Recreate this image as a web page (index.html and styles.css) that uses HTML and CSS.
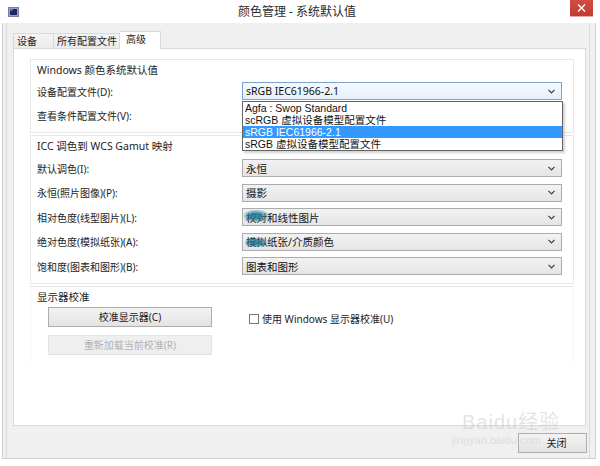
FILE: index.html
```html
<!DOCTYPE html>
<html lang="zh-CN">
<head>
<meta charset="utf-8">
<title>颜色管理 - 系统默认值</title>
<link rel="stylesheet" href="styles.css">
</head>
<body>
<div class="window">
  <div class="titlebar">
    <div class="tb-left">
      <svg class="appicon" width="11" height="10" viewBox="0 0 11 10">
        <rect x="0.5" y="0.5" width="10" height="9" fill="#9ea3c0" stroke="#7c80a0"/>
        <rect x="2" y="2" width="7" height="6" fill="#1d2466"/>
        <rect x="2" y="2" width="3" height="2" fill="#5a64b0"/>
      </svg>
    </div>
    <div class="title">颜色管理 - 系统默认值</div>
    <div class="tb-right">
      <div class="closebox">
        <svg width="9" height="8" viewBox="0 0 9 8"><path d="M1 0.5 L8 7.5 M8 0.5 L1 7.5" stroke="#fff" stroke-width="1.3" fill="none"/></svg>
      </div>
    </div>
  </div>

  <div class="client">
    <div class="inner">
      <div class="tabs">
        <div class="tab t1">设备</div>
        <div class="tab t2">所有配置文件</div>
        <div class="tab active t3">高级</div>
      </div>

      <div class="panel">
        <div class="group">
          <div class="ghead">Windows 颜色系统默认值</div>
          <div class="rows first">
            <div class="row">
              <span class="label">设备配置文件(D):</span>
              <div class="combo-wrap">
                <div class="combo open"><span>sRGB IEC61966-2.1</span><svg class="chev" width="7" height="5" viewBox="0 0 7 5"><polyline points="0.5,0.8 3.5,3.8 6.5,0.8" fill="none" stroke="#3c3c3c" stroke-width="1.2"/></svg></div>
                <ul class="list">
                  <li>Agfa : Swop Standard</li>
                  <li>scRGB 虚拟设备模型配置文件</li>
                  <li class="sel">sRGB IEC61966-2.1</li>
                  <li>sRGB 虚拟设备模型配置文件</li>
                </ul>
              </div>
            </div>
            <div class="row">
              <span class="label">查看条件配置文件(V):</span>
              <div class="combo"><span></span><svg class="chev" width="7" height="5" viewBox="0 0 7 5"><polyline points="0.5,0.8 3.5,3.8 6.5,0.8" fill="none" stroke="#3c3c3c" stroke-width="1.2"/></svg></div>
            </div>
          </div>
        </div>

        <div class="group">
          <div class="ghead">ICC 调色到 WCS Gamut 映射</div>
          <div class="rows second">
            <div class="row">
              <span class="label">默认调色(I):</span>
              <div class="combo"><span>永恒</span><svg class="chev" width="7" height="5" viewBox="0 0 7 5"><polyline points="0.5,0.8 3.5,3.8 6.5,0.8" fill="none" stroke="#3c3c3c" stroke-width="1.2"/></svg></div>
            </div>
            <div class="row">
              <span class="label">永恒(照片图像)(P):</span>
              <div class="combo"><span>摄影</span><svg class="chev" width="7" height="5" viewBox="0 0 7 5"><polyline points="0.5,0.8 3.5,3.8 6.5,0.8" fill="none" stroke="#3c3c3c" stroke-width="1.2"/></svg></div>
            </div>
            <div class="row">
              <span class="label">相对色度(线型图片)(L):</span>
              <div class="combo"><span>校对和线性图片</span><i class="smudge s1"></i><svg class="chev" width="7" height="5" viewBox="0 0 7 5"><polyline points="0.5,0.8 3.5,3.8 6.5,0.8" fill="none" stroke="#3c3c3c" stroke-width="1.2"/></svg></div>
            </div>
            <div class="row">
              <span class="label">绝对色度(模拟纸张)(A):</span>
              <div class="combo"><span>模拟纸张/介质颜色</span><i class="smudge s2"></i><svg class="chev" width="7" height="5" viewBox="0 0 7 5"><polyline points="0.5,0.8 3.5,3.8 6.5,0.8" fill="none" stroke="#3c3c3c" stroke-width="1.2"/></svg></div>
            </div>
            <div class="row">
              <span class="label">饱和度(图表和图形)(B):</span>
              <div class="combo"><span>图表和图形</span><svg class="chev" width="7" height="5" viewBox="0 0 7 5"><polyline points="0.5,0.8 3.5,3.8 6.5,0.8" fill="none" stroke="#3c3c3c" stroke-width="1.2"/></svg></div>
            </div>
          </div>
        </div>

        <div class="group last">
          <div class="ghead">显示器校准</div>
          <div class="calib">
            <div class="btncol">
              <div class="btn">校准显示器(C)</div>
              <div class="btn disabled">重新加载当前校准(R)</div>
            </div>
            <div class="check">
              <span class="box"></span>
              <span>使用 Windows 显示器校准(U)</span>
            </div>
          </div>
        </div>
      </div>

      <div class="footer">
        <div class="btn closebtn">关闭</div>
      </div>
    </div>
  </div>

  <div class="watermark">
    <span class="wm1">Baidu经验</span>
    <span class="wm2">jingyan.baidu.com</span>
  </div>
</div>
</body>
</html>
```

FILE: styles.css
```css
* { box-sizing: border-box; }

html, body {
  margin: 0;
  padding: 0;
  background: #ffffff;
}

.window {
  position: relative;
  width: 600px;
  height: 466px;
  overflow: hidden;
  font-family: "Noto Sans", "Noto Sans CJK SC", sans-serif;
  font-size: 10px;
  color: #1c1c1c;
  display: flex;
  flex-direction: column;
}

/* title bar */
.titlebar {
  height: 23px;
  flex: none;
  display: grid;
  grid-template-columns: 1fr auto 1fr;
  background: #ffffff;
}
.tb-left {
  padding: 7px 0 0 8px;
}
.appicon { display: block; }
.title {
  font-size: 12px;
  line-height: 23px;
  color: #2b2b2b;
  padding-right: 6px;
}
.tb-right {
  display: flex;
  justify-content: flex-end;
  padding-right: 7px;
}
.closebox {
  width: 23px;
  height: 17px;
  background: linear-gradient(#cf4d45, #c33a32);
  border-bottom: 1px solid #e4a9a5;
  display: flex;
  align-items: center;
  justify-content: center;
}
.closebox svg { display: block; }

/* client frame */
.client {
  flex: none;
  height: 436px;
  margin: 0 4px 0 2px;
  border: 1px solid #cfcfcf;
  border-top: none;
  background: #f0f0f0;
  display: flex;
}
.inner {
  flex: 1;
  margin: 0 5px 0 3px;
  border-left: 1px solid #dadada;
  border-right: 1px solid #dadada;
  padding: 0 3px 0 6px;
  display: flex;
  flex-direction: column;
}

/* tabs */
.tabs {
  display: flex;
  align-items: flex-end;
  height: 26px;
  margin-bottom: -1px;
  position: relative;
  z-index: 2;
}
.tab {
  height: 16px;
  border: 1px solid #d9d9d9;
  border-right: none;
  background: linear-gradient(#f3f3f3, #ebebeb);
  font-size: 10px;
  line-height: 14px;
  padding: 0 2px 0 3px;
  color: #1c1c1c;
  white-space: nowrap;
}
.t1 { width: 40px; }
.t2 { width: 67px; border-right: 1px solid #d9d9d9; }
.tab.active {
  width: 41px;
  height: 18px;
  background: #ffffff;
  border: 1px solid #d9d9d9;
  border-bottom: none;
  border-left: none;
  padding-left: 6px;
  line-height: 15px;
}

/* panel */
.panel {
  flex: 1;
  background: #ffffff;
  border: 1px solid #d9d9d9;
  padding: 10px 11px 0 16px;
  display: flex;
  flex-direction: column;
  gap: 2px;
}
.group {
  border: 1px solid #e8e8e8;
  padding: 3px 11px 8px 6px;
}
.group.last {
  border-bottom-color: #ffffff;
  border-left-color: #f6f6f6;
  border-right-color: #f6f6f6;
}
.ghead {
  font-size: 10.5px;
  line-height: 14px;
  height: 14px;
  white-space: nowrap;
}
.rows {
  display: flex;
  flex-direction: column;
}
.rows.first { margin-top: 5px; gap: 6px; }
.rows.second { margin-top: 6px; gap: 6.5px; }
.row {
  display: flex;
  align-items: center;
  height: 18px;
}
.label {
  flex: 1;
  white-space: nowrap;
}

/* combos */
.combo-wrap {
  position: relative;
  width: 320px;
  height: 18px;
}
.combo {
  position: relative;
  width: 320px;
  height: 18px;
  border: 1px solid #acacac;
  background: linear-gradient(#f2f2f2, #e5e5e5);
  display: flex;
  align-items: center;
  justify-content: space-between;
  padding: 0 6px 0 3px;
  white-space: nowrap;
  color: #111;
  font-size: 10.5px;
}
.combo.open {
  border-color: #7da2ce;
  background: linear-gradient(#f6fafe, #e6f0fb);
}
.chev { display: block; flex: none; }

.list {
  position: absolute;
  left: 0;
  top: 19px;
  width: 321px;
  margin: 0;
  padding: 0;
  list-style: none;
  background: #ffffff;
  border: 1px solid #646464;
  box-shadow: 2px 2px 2px rgba(0, 0, 0, 0.18);
  z-index: 5;
}
.list li {
  height: 12px;
  line-height: 12px;
  padding: 0 2px;
  white-space: nowrap;
  color: #111;
  font-family: "Liberation Sans", "Noto Sans CJK SC", sans-serif;
  font-size: 10.5px;
}
.list li.sel {
  background: #3399ff;
  color: #ffffff;
}

.smudge {
  position: absolute;
  display: block;
  border-radius: 40%;
  background: radial-gradient(ellipse at center, rgba(30, 120, 150, 0.85) 30%, rgba(60, 160, 190, 0.25) 75%, rgba(60, 160, 190, 0) 100%);
}
.s1 { left: 1px; top: 1px; width: 24px; height: 12px; }
.s2 { left: 2px; top: 4px; width: 22px; height: 9px; }

/* calibration */
.calib {
  display: flex;
  align-items: flex-start;
  margin-top: 3px;
}
.btncol {
  margin-left: 11px;
  width: 164px;
  display: flex;
  flex-direction: column;
  gap: 8px;
}
.btn {
  height: 20px;
  border: 1px solid #adadad;
  background: linear-gradient(#f3f3f3, #e3e3e3);
  text-align: center;
  line-height: 18px;
  color: #1c1c1c;
  white-space: nowrap;
}
.btn.disabled {
  border-color: #e4e4e4;
  background: #efefef;
  color: #b2b2b2;
}
.check {
  margin-left: 37px;
  margin-top: 4px;
  display: flex;
  align-items: center;
  gap: 3px;
  white-space: nowrap;
}
.box {
  width: 10px;
  height: 10px;
  border: 1px solid #767676;
  background: #ffffff;
}

/* footer */
.footer {
  flex: none;
  height: 32px;
  display: flex;
  justify-content: flex-end;
  padding-top: 7px;
}
.closebtn {
  width: 69px;
  margin-right: -1px;
  padding-left: 8px;
}

/* watermark */
.watermark {
  position: absolute;
  left: 452px;
  top: 411px;
  display: flex;
  flex-direction: column;
  align-items: flex-start;
  pointer-events: none;
}
.wm1 {
  margin-left: 10px;
  font-family: "Liberation Sans", "Noto Sans CJK SC", sans-serif;
  font-size: 20px;
  line-height: 22px;
  color: rgba(205, 205, 205, 0.55);
  letter-spacing: 1px;
}
.wm2 {
  font-family: "Liberation Sans", sans-serif;
  font-size: 11px;
  line-height: 14px;
  color: rgba(205, 205, 205, 0.55);
}
```
